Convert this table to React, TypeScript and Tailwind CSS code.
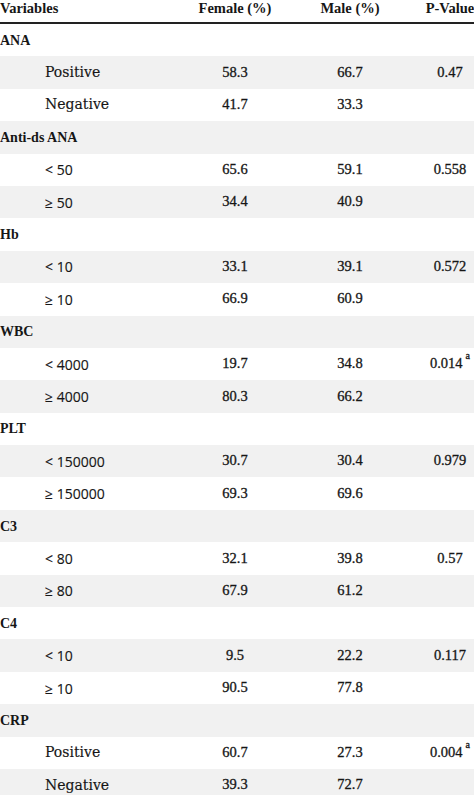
import React from "react";

type Row =
  | { kind: "group"; label: string }
  | { kind: "item"; label: string; sans?: boolean; f: string; m: string; p?: string; sup?: boolean };

const rows: Row[] = [
  { kind: "group", label: "ANA" },
  { kind: "item", label: "Positive", f: "58.3", m: "66.7", p: "0.47" },
  { kind: "item", label: "Negative", f: "41.7", m: "33.3" },
  { kind: "group", label: "Anti-ds ANA" },
  { kind: "item", label: "< 50", sans: true, f: "65.6", m: "59.1", p: "0.558" },
  { kind: "item", label: "≥ 50", sans: true, f: "34.4", m: "40.9" },
  { kind: "group", label: "Hb" },
  { kind: "item", label: "< 10", sans: true, f: "33.1", m: "39.1", p: "0.572" },
  { kind: "item", label: "≥ 10", sans: true, f: "66.9", m: "60.9" },
  { kind: "group", label: "WBC" },
  { kind: "item", label: "< 4000", sans: true, f: "19.7", m: "34.8", p: "0.014", sup: true },
  { kind: "item", label: "≥ 4000", sans: true, f: "80.3", m: "66.2" },
  { kind: "group", label: "PLT" },
  { kind: "item", label: "< 150000", sans: true, f: "30.7", m: "30.4", p: "0.979" },
  { kind: "item", label: "≥ 150000", sans: true, f: "69.3", m: "69.6" },
  { kind: "group", label: "C3" },
  { kind: "item", label: "< 80", sans: true, f: "32.1", m: "39.8", p: "0.57" },
  { kind: "item", label: "≥ 80", sans: true, f: "67.9", m: "61.2" },
  { kind: "group", label: "C4" },
  { kind: "item", label: "< 10", sans: true, f: "9.5", m: "22.2", p: "0.117" },
  { kind: "item", label: "≥ 10", sans: true, f: "90.5", m: "77.8" },
  { kind: "group", label: "CRP" },
  { kind: "item", label: "Positive", f: "60.7", m: "27.3", p: "0.004", sup: true },
  { kind: "item", label: "Negative", f: "39.3", m: "72.7" },
];

const serif = { fontFamily: '"Liberation Serif", serif' };
const dejavu = { fontFamily: '"DejaVu Serif", serif' };
const sans = { fontFamily: '"Open Sans", sans-serif' };

export default function App() {
  return (
    <div
      className="w-[474px] h-[795px] overflow-hidden bg-white text-[#161616] text-[14px]"
      style={serif}
    >
      <div className="w-[500px]">
        <div className="flex h-[22px] items-start font-bold text-[14.5px] leading-[16px]">
          <div className="w-[185px]">Variables</div>
          <div className="w-[100px] text-center">Female (%)</div>
          <div className="w-[130px] text-center">Male (%)</div>
          <div className="w-[70px] text-center">P-Value</div>
        </div>
        <div className="h-[2px] bg-[#222]" />
        {rows.map((r, i) => (
          <div
            key={i}
            className={`flex h-[32.4px] items-center ${i % 2 === 1 ? "bg-[#f1f1f1]" : "bg-white"}`}
          >
            {r.kind === "group" ? (
              <div className="w-[185px] font-bold text-[14px]">{r.label}</div>
            ) : (
              <>
                <div
                  className="w-[185px] pl-[45px] text-[14px] [-webkit-text-stroke:0.15px_#161616]"
                  style={r.sans ? sans : dejavu}
                >
                  {r.label}
                </div>
                <div className="w-[100px] text-center text-[14.5px] [-webkit-text-stroke:0.3px_#161616]">{r.f}</div>
                <div className="w-[130px] text-center text-[14.5px] [-webkit-text-stroke:0.3px_#161616]">{r.m}</div>
                <div className="w-[70px] text-center text-[14.5px] [-webkit-text-stroke:0.3px_#161616]">
                  {r.p}
                  {r.sup ? <sup className="ml-[3px] text-[10px] align-[4px]">a</sup> : null}
                </div>
              </>
            )}
          </div>
        ))}
      </div>
    </div>
  );
}
